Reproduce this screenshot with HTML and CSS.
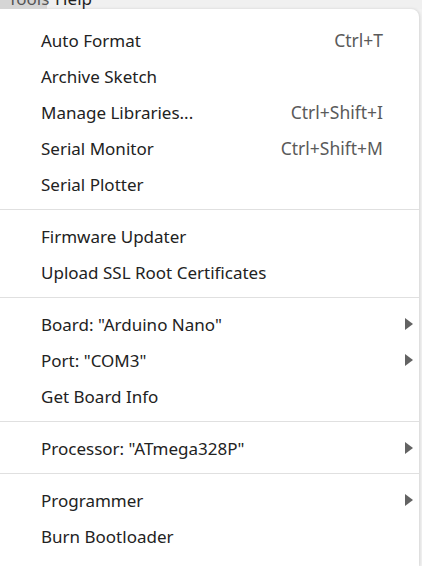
FILE: index.html
```html
<!DOCTYPE html>
<html>
<head>
<meta charset="utf-8">
<link rel="stylesheet" href="styles.css">
</head>
<body>
<div class="menubar">
  <span class="mb-item active">Tools</span>
  <span class="mb-item">Help</span>
</div>
<div class="menu">
  <div class="group">
    <div class="item"><span class="label">Auto Format</span><span class="key">Ctrl+T</span><span class="sub"></span></div>
    <div class="item"><span class="label">Archive Sketch</span><span class="key"></span><span class="sub"></span></div>
    <div class="item"><span class="label">Manage Libraries...</span><span class="key">Ctrl+Shift+I</span><span class="sub"></span></div>
    <div class="item"><span class="label">Serial Monitor</span><span class="key">Ctrl+Shift+M</span><span class="sub"></span></div>
    <div class="item"><span class="label">Serial Plotter</span><span class="key"></span><span class="sub"></span></div>
  </div>
  <div class="sep"></div>
  <div class="group">
    <div class="item"><span class="label">Firmware Updater</span><span class="key"></span><span class="sub"></span></div>
    <div class="item"><span class="label">Upload SSL Root Certificates</span><span class="key"></span><span class="sub"></span></div>
  </div>
  <div class="sep"></div>
  <div class="group">
    <div class="item"><span class="label">Board: "Arduino Nano"</span><span class="key"></span><span class="sub"><svg width="8" height="12" viewBox="0 0 8 12"><path d="M0 0L8 6L0 12Z"/></svg></span></div>
    <div class="item"><span class="label">Port: "COM3"</span><span class="key"></span><span class="sub"><svg width="8" height="12" viewBox="0 0 8 12"><path d="M0 0L8 6L0 12Z"/></svg></span></div>
    <div class="item"><span class="label">Get Board Info</span><span class="key"></span><span class="sub"></span></div>
  </div>
  <div class="sep"></div>
  <div class="group">
    <div class="item"><span class="label">Processor: "ATmega328P"</span><span class="key"></span><span class="sub"><svg width="8" height="12" viewBox="0 0 8 12"><path d="M0 0L8 6L0 12Z"/></svg></span></div>
  </div>
  <div class="sep"></div>
  <div class="group">
    <div class="item"><span class="label">Programmer</span><span class="key"></span><span class="sub"><svg width="8" height="12" viewBox="0 0 8 12"><path d="M0 0L8 6L0 12Z"/></svg></span></div>
    <div class="item"><span class="label">Burn Bootloader</span><span class="key"></span><span class="sub"></span></div>
  </div>
</div>
</body>
</html>
```
FILE: styles.css
```css
html, body {
  margin: 0;
  padding: 0;
  background: #f2f2f2;
  height: 566px;
  overflow: hidden;
}
body {
  font-family: "Noto Sans", "Open Sans", sans-serif;
  color: #222;
}
.menubar {
  display: flex;
  height: 9px;
  overflow: hidden;
  background: #f0f0f0;
  font-size: 17px;
  line-height: 14px;
}
.mb-item {
  display: block;
  padding: 0 10px 0 8px;
  margin-top: -8px;
  height: 17px;
  color: #222;
}
.mb-item.active {
  background: #d5d5d5;
  width: 29px;
  color: #555;
}
.menu {
  background: #fff;
  width: 419px;
  height: 557px;
  border-top-right-radius: 8px;
  box-shadow: 1px 0 3px rgba(0,0,0,0.12);
  padding-top: 13px;
  box-sizing: border-box;
}
.item {
  display: flex;
  align-items: center;
  height: 36px;
  padding-left: 41px;
  font-size: 17px;
}
.label {
  flex: 1;
  white-space: nowrap;
}
.key {
  color: #5a5a5a;
  font-size: 17.5px;
}
.sub {
  width: 36px;
  display: flex;
  align-items: center;
  padding-left: 22px;
  box-sizing: border-box;
}
.sub svg {
  fill: #636363;
  display: block;
}
.sep {
  height: 1px;
  background: #e0e0e0;
  margin: 7px 0 8px;
}
```
